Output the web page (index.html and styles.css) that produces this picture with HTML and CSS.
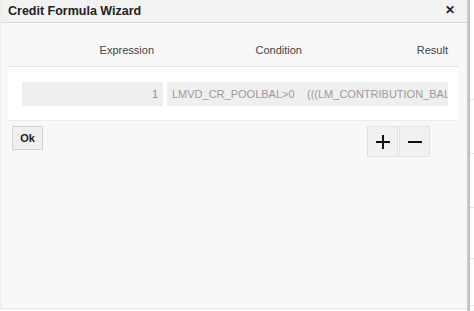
FILE: index.html
```html
<!DOCTYPE html>
<html>
<head>
<meta charset="utf-8">
<link rel="stylesheet" href="styles.css">
</head>
<body>
<div class="page">
  <div class="dialog">
    <div class="header">
      <span class="title">Credit Formula Wizard</span>
      <span class="close">&#x2715;</span>
    </div>
    <div class="content">
      <div class="colhead">
        <span class="lbl">Expression</span>
        <span class="lbl">Condition</span>
        <span class="lbl">Result</span>
      </div>
      <div class="panel">
        <div class="row">
          <input class="cell cell-exp" type="text" value="1" readonly>
          <input class="cell cell-cond" type="text" value="LMVD_CR_POOLBAL&gt;0" readonly>
          <input class="cell cell-res" type="text" value="(((LM_CONTRIBUTION_BAL*100)/LM_POOL_BAL)" readonly>
        </div>
      </div>
      <div class="actions">
        <button class="ok">Ok</button>
        <div class="pm">
          <button class="pmbtn"><svg width="16" height="16" viewBox="0 0 16 16"><path d="M8 1v14M1 8h14" stroke="#111" stroke-width="2" fill="none"/></svg></button>
          <button class="pmbtn"><svg width="16" height="16" viewBox="0 0 16 16"><path d="M1 8h14" stroke="#111" stroke-width="2" fill="none"/></svg></button>
        </div>
      </div>
    </div>
  </div>
  <div class="shadow"></div>
  <div class="strip">
    <div class="seg s1"></div>
    <div class="seg s2"></div>
    <div class="seg s3"></div>
    <div class="seg s4"></div>
    <div class="seg s5"></div>
  </div>
</div>
</body>
</html>
```
FILE: styles.css
```css
html, body {
  margin: 0;
  padding: 0;
  background: #ffffff;
  font-family: "Liberation Sans", Arial, sans-serif;
}
.page {
  display: flex;
  width: 474px;
  height: 311px;
  overflow: hidden;
}
.dialog {
  width: 466px;
  height: 308px;
  background: #f8f8f8;
  border-left: 1px solid #ececec;
  border-bottom: 1px solid #e6e6e6;
  display: flex;
  flex-direction: column;
}
.header {
  height: 22px;
  border-bottom: 1px solid #d9d9d9;
  background: #f2f2f2;
  display: flex;
  align-items: center;
  justify-content: space-between;
  padding: 0 12px 0 7px;
}
.title {
  font-weight: bold;
  font-size: 12.5px;
  color: #222;
}
.close {
  font-weight: bold;
  font-size: 12px;
  color: #222;
  margin-top: -2px;
}
.content {
  padding: 0 8px 0 7px;
}
.colhead {
  height: 44px;
  box-sizing: border-box;
  border-bottom: 1px solid #e6e6e6;
  display: grid;
  grid-template-columns: 139px 148px 146px;
  align-items: end;
  padding: 0 0 10px 7px;
  font-size: 11px;
  color: #444;
}
.lbl { text-align: right; }
.panel {
  background: #ffffff;
  padding: 15px 0 14px 14px;
  border-bottom: 1px solid #ececec;
  width: 436px;
}
.row {
  display: grid;
  grid-template-columns: 145px 133px 148px;
  height: 24px;
}
.cell {
  box-sizing: border-box;
  width: 100%;
  height: 24px;
  margin: 0;
  border: 0;
  outline: none;
  background: #efefef;
  font-family: "Liberation Sans", Arial, sans-serif;
  font-size: 11px;
  color: #9c9c9c;
}
.cell-exp {
  width: 141px;
  text-align: right;
  padding: 0 5px 0 0;
  color: #8c8c8c;
}
.cell-cond { padding: 0 0 0 5px; }
.cell-res { padding: 0 0 0 7px; }
.actions {
  display: flex;
  justify-content: space-between;
  align-items: flex-start;
  padding: 5px 29px 0 4px;
}
.ok {
  width: 31px;
  height: 24px;
  background: #efefef;
  border: 1px solid #d2d2d2;
  font-family: "Liberation Sans", Arial, sans-serif;
  font-weight: bold;
  font-size: 11px;
  color: #222;
  padding: 0;
}
.pm {
  display: flex;
  gap: 1px;
}
.pmbtn {
  width: 31px;
  height: 31px;
  background: #f1f1f1;
  border: 1px solid #e2e2e2;
  padding: 0;
  display: flex;
  align-items: center;
  justify-content: center;
}
.shadow {
  width: 3px;
  height: 311px;
  background: linear-gradient(to right, #cfcfcf, #bdbdbd);
}
.strip {
  width: 4px;
  display: flex;
  flex-direction: column;
}
.seg { border-bottom: 1px solid #e4e4e4; }
.s1 { height: 99px; }
.s2 { height: 53px; }
.s3 { height: 53px; }
.s4 { height: 50px; }
.s5 { height: 46px; }
```
